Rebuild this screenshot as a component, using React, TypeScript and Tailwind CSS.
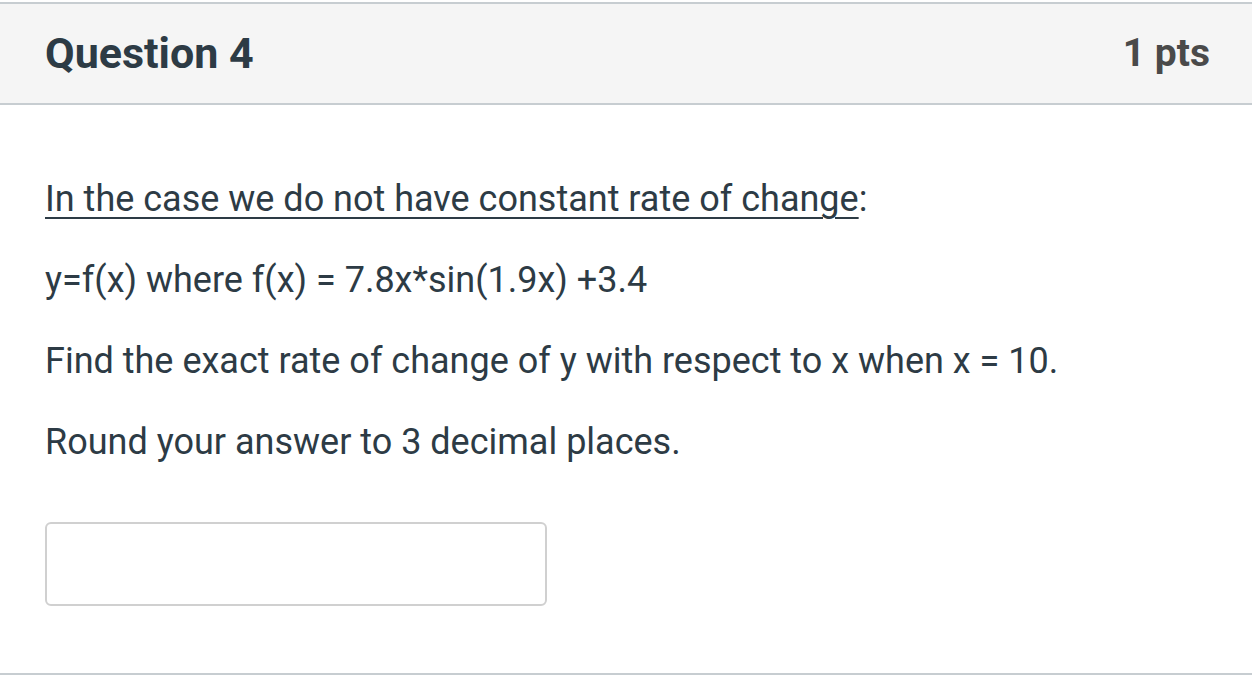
import React from 'react';

const App: React.FC = () => {
  return (
    <div className="w-[1252px] h-[676px] bg-white overflow-hidden font-['Roboto',sans-serif] text-[#2d3b45] flex flex-col">
      <div className="mt-[2px] border-t-2 border-b-2 border-[#c7cdd1] bg-[#f5f5f5] h-[103px] shrink-0 flex items-center justify-between pl-[45px] pr-[42px]">
        <h2 className="text-[43px] font-bold leading-none">Question 4</h2>
        <span className="text-[39px] font-bold leading-none text-[#4a4a4a]">1 pts</span>
      </div>
      <div className="flex-1 border-b-2 border-[#c7cdd1] mb-[1px] pl-[45px] pt-[73px] text-[36px] leading-[42px]">
        <p className="mb-[39px]">
          <span className="underline underline-offset-[6px] decoration-[2px]">In the case we do not have constant rate of change</span>:
        </p>
        <p className="mb-[39px]">y=f(x) where f(x) = 7.8x*sin(1.9x) +3.4</p>
        <p className="mb-[39px]">Find the exact rate of change of y with respect to x when x = 10.</p>
        <p>Round your answer to 3 decimal places.</p>
        <input
          type="text"
          className="mt-[59px] block w-[502px] h-[84px] border-2 border-[#d0d0d0] rounded-[6px] bg-white outline-none"
        />
      </div>
    </div>
  );
};

export default App;
